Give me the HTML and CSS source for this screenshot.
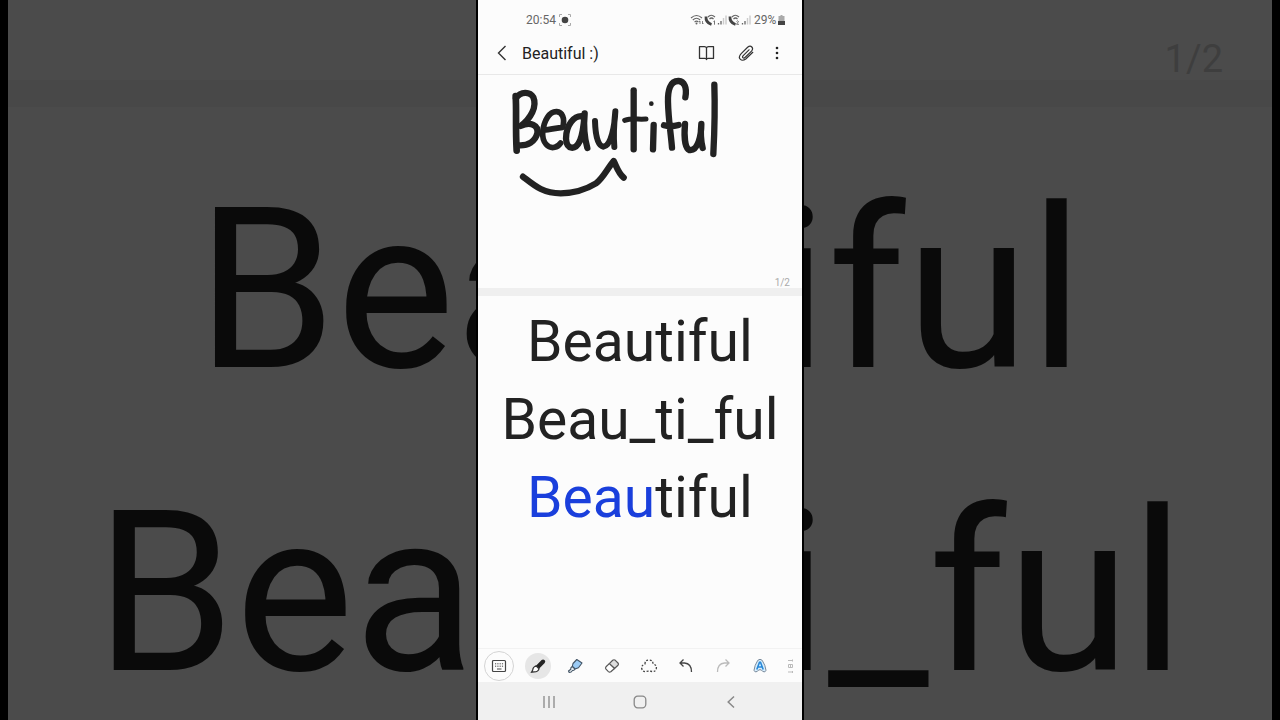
FILE: index.html
```html
<!DOCTYPE html>
<html lang="en">
<head>
<meta charset="utf-8">
<meta name="viewport" content="width=device-width, initial-scale=1">
<title>Beautiful :)</title>
<link rel="stylesheet" href="styles.css">
</head>
<body>
<div class="stage">
  <div class="backdrop" aria-hidden="true">
    <div class="backdrop-top">1/2</div>
    <div class="backdrop-gap"></div>
    <div class="backdrop-words">
      <div>Beautiful</div>
      <div>Beau_ti_ful</div>
    </div>
  </div>

  <main class="phone">
    <div class="status">
      <span>20:54</span>
      <svg class="rec" width="12" height="12" viewBox="0 0 12 12" fill="none" stroke="#aaa"><circle cx="6" cy="6" r="3.300" fill="#444" stroke="none"/><path d="M.5 3V.5H3M9 .5h2.500V3M11.500 9v2.500H9M3 11.500H.5V9"/></svg>
      <div class="signals">
        <svg width="96" height="12" viewBox="0 0 96 12" fill="none" stroke="#666" role="img" aria-label="Wi-Fi, two SIM signals">
          <path d="M1 4Q6.500-1 12 4M2.800 6Q6.500 2.500 10.200 6M4.600 8Q6.500 6.300 8.400 8" stroke-width="1.100"/><circle cx="6.500" cy="9.500" r="1" fill="#666" stroke="none"/><path d="M10 7v3M12.500 7v3M9 8l1-1M12.500 10l1-1" stroke-width=".8"/>
          <g id="sim"><path d="M16 2.500Q15.500 8.500 21.500 10.500" stroke="#444" stroke-width="2.800"/><path d="M18 3Q21-.5 25 3M19.500 5Q21.500 3 23.500 5" stroke-width="1.200"/><path d="M28.500 10.500v-1.500M31 10.500V7" stroke-width="1.300"/><path d="M33.500 10.500V4M36 10.500V1.500" stroke="#ccc" stroke-width="1.400"/></g>
          <use href="#sim" x="24"/>
          <path d="M23.500 7.500l1-.7v3.900M46.500 7.500Q48 6 48.500 7.500L46.500 10.300h2.500" stroke-width=".9"/>
          <text class="percent" x="64" y="10.400">29%</text>
          <path d="M88.500 2h2V1h2v1h2v5h-6z" fill="#aaa" stroke="none"/><path d="M88 7h7v4h-7z" fill="#444" stroke="none"/>
        </svg>
      </div>
    </div>

    <header class="header">
      <button class="icon-btn" aria-label="Back"><svg width="12" height="18" viewBox="0 0 12 18" fill="none" stroke="#333" stroke-width="1.400"><path d="M9.500 2 2.500 9l7 7"/></svg></button>
      <h1>Beautiful :)</h1>
      <button class="icon-btn wide" aria-label="Reading mode"><svg width="18" height="18" viewBox="0 0 18 18" fill="none" stroke="#333" stroke-width="1.300" stroke-linejoin="round"><path d="M9.500 3.800Q9 2.600 7.500 2.600H2.500v11.800H8Q9.500 14.400 9.500 15.600 9.500 14.400 11 14.400H16.500V2.600h-5Q10 2.600 9.500 3.800v11.500"/></svg></button>
      <button class="icon-btn wide" aria-label="Attach"><svg width="18" height="18" viewBox="0 0 18 18" fill="none" stroke="#333" stroke-width="1.200" stroke-linecap="round"><path d="M12 5.800 6.200 11.700Q5 13 6 13.900T8.300 13.200L14.500 7.200Q16.500 4.800 14.800 3T10.600 3.300L4.200 9.600Q1 13 3.200 15.200T8.800 15L15.800 8.300"/></svg></button>
      <button class="icon-btn menu" aria-label="More options"><svg width="6" height="18" viewBox="0 0 6 18" fill="#222"><circle cx="3" cy="4" r="1.300"/><circle cx="3" cy="9" r="1.300"/><circle cx="3" cy="14" r="1.300"/></svg></button>
    </header>

    <section class="page first">
      <svg class="ink" viewBox="-66 9 972 639" role="img" aria-label="Handwritten: Beautiful, with a curve underneath">
        <g class="pen">
          <path d="M47 72C50 115 46 165 50 236" stroke-width="20"/>
          <path d="M48 78C62 58 90 58 100 76C112 104 92 140 62 162C92 148 116 160 112 184C106 208 84 222 56 220"/>
          <path d="M132 174C150 173 168 168 188 166C196 138 186 120 170 119C148 118 132 145 128 180C126 214 146 230 164 226Q174 224 182 213" stroke-width="17"/>
          <path d="M250 133C222 128 198 160 198 200C200 234 226 236 240 206C250 182 252 150 254 124C250 165 254 200 262 228"/>
          <path d="M285 147C286 185 292 222 310 224C334 222 344 160 346 118C342 155 340 190 343 225" stroke-width="18"/>
          <path d="M401 55V232"/><path d="M374 145C395 138 415 143 438 141" stroke-width="15"/>
          <path d="M461 159 459 232"/>
          <path d="M556 76C562 46 552 28 536 27C510 26 503 56 504 90C505 140 512 180 516 227M492 160Q512 166 536 159"/>
          <path d="M555 156C552 190 554 228 568 234C594 238 604 190 604 156C601 185 602 205 608 228"/>
          <path d="M643 38Q646 130 640 246"/>
          <path d="M69 314C105 342 130 364 182 364C232 363 262 350 288 334C308 320 322 290 341 267C350 284 354 302 371 317"/>
        </g>
        <circle cx="454" cy="95" r="7" fill="#222"/>
      </svg>
      <span class="page-no">1/2</span>
    </section>
    <div class="page-gap"></div>
    <section class="page second">
      <p>Beautiful</p>
      <p>Beau_ti_ful</p>
      <p><span class="blue">Beau</span>tiful</p>
    </section>

    <div class="tools">
      <button class="tool first-tool" aria-label="Keyboard"><span class="ring"><svg width="16" height="14" viewBox="0 0 16 14" fill="none" stroke="#444"><rect x="1.500" y="1.500" width="13" height="11" rx="1" stroke-width="1.200"/><path d="M4 4.800h9M4 7.200h9" stroke-dasharray="1.200 1.100"/><path d="M6 10h4.500"/></svg></span></button>
      <button class="tool" aria-label="Pen"><span class="picked"><svg width="18" height="18" viewBox="0 0 18 18"><path d="M7 8.800 12.600 3Q14 1.800 15.500 3T15.700 6L10 11.800z" fill="#222"/><path d="M7 8.800Q3.800 10.200 3.700 13L2.500 15.200 5.200 14.800Q9.200 14.800 10 11.800z" fill="#fff" stroke="#333" stroke-width="1.200"/></svg></span></button>
      <button class="tool" aria-label="Highlighter"><svg width="18" height="18" viewBox="0 0 18 18" stroke="#456" stroke-width="1.100" stroke-linejoin="round"><path d="M7 6.500 10.800 2.500 16 6 12.500 10.800 9 12 6.300 9.500z" fill="#9bcbf5"/><path d="M6.300 9.500 4.800 10.800 4.800 12.200 2.500 14 3.200 15.500 5.200 15 6.500 13.500 8 13.200 9 12z" fill="#e8eef2"/></svg></button>
      <button class="tool" aria-label="Eraser"><svg width="18" height="18" viewBox="0 0 18 18" stroke="#555" stroke-width="1.200" stroke-linejoin="round"><path d="M9.700 3.300Q11 2.200 12.300 3.300L15 6Q16 7.200 15 8.300L11.500 11.500 6.300 6.600z" fill="#ddd"/><path d="M6.300 6.600 3 9.800Q2 11 3 12.200L5.400 14.600Q6.500 15.500 7.800 14.700L11.500 11.500z" fill="#fff"/></svg></button>
      <button class="tool" aria-label="Lasso"><svg width="18" height="18" viewBox="0 0 18 18" fill="none" stroke="#444" stroke-width="1.300" stroke-dasharray="2 1.500"><path d="M5 7Q5 3 9 3T13 7Q17 8 16.300 11.500 15.500 15 12 14.500 9 13.800 6 14.500 2.500 15 1.700 11.500 1.300 8.200 5 7z"/></svg></button>
      <button class="tool" aria-label="Undo"><svg width="18" height="18" viewBox="0 0 18 18" fill="none" stroke="#444" stroke-width="1.300"><path d="M6.500 2.500 3 6l3.500 3.500M3 6h4.500Q14.500 6.500 14.500 15"/></svg></button>
      <button class="tool" aria-label="Redo"><svg width="18" height="18" viewBox="0 0 18 18" fill="none" stroke="#bbb" stroke-width="1.300"><path d="M11.500 2.500 15 6l-3.500 3.500M15 6h-4.500Q3.500 6.500 3.500 15"/></svg></button>
      <button class="tool" aria-label="Text style"><svg width="16" height="18" viewBox="0 0 16 18"><path d="M5.800 3.300Q8 1.300 10.200 3.300 13.500 8.500 14 13.300 13.300 15.800 10.800 14.500 9.500 12.500 8 12.700 6.500 12.500 5.200 14.500 2.700 15.800 2 13.300 2.500 8.500 5.800 3.300z" fill="#d8efff" stroke="#778899" stroke-width="1"/><path d="M4.800 12.500 7.500 5.200h1L11.200 12.500M5.800 10h4.400" fill="none" stroke="#2788d8" stroke-width="1.600"/></svg></button>
      <button class="tool last-tool" aria-label="Alignment"><svg width="8" height="16" viewBox="0 0 8 16" fill="none" stroke="#bbb"><path d="M2 2.500h4.500M2 14h4.500M6.500 1.500v2M6.500 13v2M2.500 6.500v3h4v-3zM4.500 6.500v3"/></svg></button>
    </div>
    <nav class="nav">
      <button aria-label="Recent apps"><svg width="14" height="14" viewBox="0 0 14 14" stroke="#888" stroke-width="1.300"><path d="M2 1v12M7 1v12M12 1v12"/></svg></button>
      <button aria-label="Home"><svg width="14" height="14" viewBox="0 0 14 14" fill="none" stroke="#888" stroke-width="1.300"><rect x="1.200" y="1.200" width="11.600" height="11.600" rx="3.500"/></svg></button>
      <button aria-label="Back"><svg width="10" height="14" viewBox="0 0 10 14" fill="none" stroke="#888" stroke-width="1.500"><path d="M8 1.500 2.200 7 8 12.500"/></svg></button>
    </nav>
  </main>
</div>
</body>
</html>
```
FILE: styles.css
```css
* { box-sizing: border-box; }
body { margin: 0; background: #000; font-family: Roboto, "Liberation Sans", sans-serif; }
h1, p { margin: 0; font-weight: 400; }
button { border: 0; padding: 0; background: none; font: inherit; display: flex; align-items: center; justify-content: center; }
svg { display: block; }

.stage { position: relative; min-height: 100vh; display: flex; justify-content: center; overflow: hidden; }

.backdrop { position: absolute; inset: 0 8px; overflow: hidden; background: #4b4b4b; color: #0a0a0a; }
.backdrop-top { height: 80px; padding: 37px 49px 0 0; text-align: right; font-size: 38px; line-height: 44px; color: #3e3e3e; }
.backdrop-gap { height: 27px; background: #484848; }
.backdrop-words { padding-top: 32px; display: flex; flex-direction: column; align-items: center; font-size: 224px; line-height: 303px; white-space: nowrap; }

.phone { position: relative; width: 328px; max-width: 100%; min-height: 100vh; display: flex; flex-direction: column; background: #fcfcfc; border: solid #000; border-width: 0 2px; color: #222; }

.status { display: flex; align-items: center; gap: 3px; height: 32px; padding: 8px 16px 0 48px; font-size: 12px; color: #666; }
.signals { margin-left: auto; }
.percent { font-size: 12px; fill: #666; stroke: none; }

.header { display: flex; align-items: center; height: 43px; border-bottom: 1px solid #e8e8e8; padding: 0 14px 0 14px; }
.header h1 { flex: 1; padding: 2px 0 0 10px; font-size: 16px; line-height: 24px; }
.icon-btn { width: 20px; height: 32px; }
.icon-btn.wide { width: 40px; }
.icon-btn.menu { width: 22px; }

.first { position: relative; }
.ink { width: 100%; height: auto; }
.pen { fill: none; stroke: #222; stroke-width: 19; stroke-linecap: round; stroke-linejoin: round; }
.page-no { position: absolute; right: 12px; bottom: 0; font-size: 10px; line-height: 10px; color: #aaa; }
.page-gap { height: 8px; background: #efefef; }
.second { flex: 1; padding-top: 7px; text-align: center; font-size: 57px; line-height: 78px; }
.blue { color: #1a3fdc; }

.tools { display: flex; height: 34px; border-top: 1px solid #f2f2f2; }
.tool { width: 37px; }
.first-tool { width: 41px; }
.last-tool { flex: 1; width: auto; }
.ring, .picked { display: flex; align-items: center; justify-content: center; border-radius: 50%; }
.ring { width: 30px; height: 30px; border: 1px solid #d4d4d4; }
.picked { width: 26px; height: 26px; background: #e6e6e6; }

.nav { display: flex; justify-content: center; height: 38px; padding-top: 1px; background: #f0f0f0; }
.nav button { width: 91px; }
```
